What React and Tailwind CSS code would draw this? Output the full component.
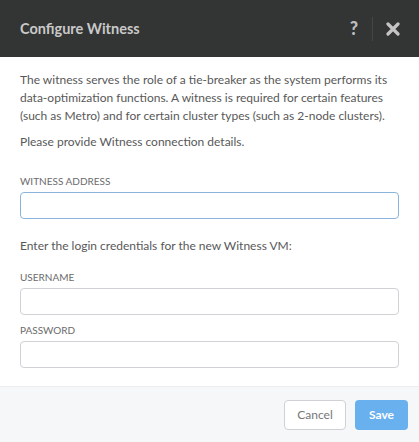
import React from 'react';

const Field = ({ label, focused, type = 'text' }) => (
  <div className="flex flex-col">
    <label className="text-[10px] leading-[12px] text-[#6b6b6b] uppercase mb-[5px]">{label}</label>
    <input
      type={type}
      className={`h-[27px] w-full rounded-[4px] border bg-white px-2 text-[12px] outline-none ${
        focused ? 'border-[#8ab4dc]' : 'border-[#cfd1d4]'
      }`}
    />
  </div>
);

export default function App() {
  return (
    <div className="w-[419px] h-[442px] bg-white flex flex-col" style={{ fontFamily: 'Lato, "Open Sans", sans-serif' }}>
      <div className="h-[57px] shrink-0 bg-[#333434] flex items-center pl-5 pr-[19px]">
        <span className="text-[14.5px] font-bold text-[#c9c9c9]">
          Configure Witness
        </span>
        <div className="ml-auto flex items-center h-full">
          <span className="text-[18px] font-black text-[#bdbdbd] mr-[14px]">?</span>
          <div className="w-px h-[24px] bg-[#444545] mr-[13px]" />
          <svg width="14" height="14" viewBox="0 0 14 14">
            <path d="M2 2 L12 12 M12 2 L2 12" stroke="#c4c4c4" strokeWidth="3.2" strokeLinecap="round" />
          </svg>
        </div>
      </div>

      <div className="flex-1 px-5 pt-[14px] text-[#585858] text-[12px] leading-[18px]">
        <p>
          The witness serves the role of a tie-breaker as the system performs its data-optimization functions. A witness is required for certain features (such as Metro) and for certain cluster types (such as 2-node clusters).
        </p>
        <p className="mt-[8px]">Please provide Witness connection details.</p>

        <div className="mt-[24px]">
          <Field label="Witness Address" focused />
        </div>

        <p className="mt-[18px]">Enter the login credentials for the new Witness VM:</p>

        <div className="mt-[16px] flex flex-col gap-[9px]">
          <Field label="Username" />
          <Field label="Password" type="password" />
        </div>
      </div>

      <div className="h-[56px] shrink-0 bg-[#f6f7f9] border-t border-[#eceef0] flex items-center justify-end gap-[9px] pr-[11px] pt-[1px]">
        <button className="h-[30px] w-[62px] rounded-[4px] border border-[#cfd1d4] bg-white text-[12px] text-[#777]">
          Cancel
        </button>
        <button className="h-[30px] w-[53px] rounded-[4px] bg-[#68b0ee] text-[12px] font-bold text-white">
          Save
        </button>
      </div>
    </div>
  );
}
